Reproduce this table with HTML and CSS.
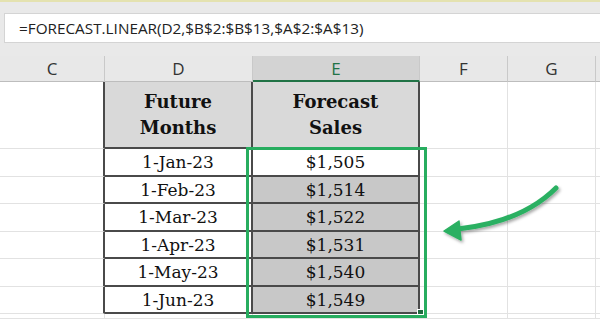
FILE: index.html
```html
<!DOCTYPE html>
<html>
<head>
<meta charset="utf-8">
<link rel="stylesheet" href="styles.css">
</head>
<body>
<div class="app">
  <div class="topbar">
    <div class="formula">=FORECAST.LINEAR(D2,$B$2:$B$13,$A$2:$A$13)</div>
  </div>
  <div class="sheet">
    <div class="colhead">C</div>
    <div class="colhead">D</div>
    <div class="colhead active">E</div>
    <div class="colhead">F</div>
    <div class="colhead">G</div>
    <div class="colhead last"></div>

    <div class="cell edge"></div>
    <div class="cell tbl head">Future<br>Months</div>
    <div class="cell tbl head">Forecast<br>Sales</div>
    <div class="cell"></div><div class="cell"></div><div class="cell last"></div>

    <div class="cell edge"></div>
    <div class="cell tbl">1-Jan-23</div>
    <div class="cell tbl">$1,505</div>
    <div class="cell"></div><div class="cell"></div><div class="cell last"></div>

    <div class="cell edge"></div>
    <div class="cell tbl">1-Feb-23</div>
    <div class="cell tbl sel">$1,514</div>
    <div class="cell"></div><div class="cell"></div><div class="cell last"></div>

    <div class="cell edge"></div>
    <div class="cell tbl">1-Mar-23</div>
    <div class="cell tbl sel">$1,522</div>
    <div class="cell"></div><div class="cell"></div><div class="cell last"></div>

    <div class="cell edge"></div>
    <div class="cell tbl">1-Apr-23</div>
    <div class="cell tbl sel">$1,531</div>
    <div class="cell"></div><div class="cell"></div><div class="cell last"></div>

    <div class="cell edge"></div>
    <div class="cell tbl">1-May-23</div>
    <div class="cell tbl sel">$1,540</div>
    <div class="cell"></div><div class="cell"></div><div class="cell last"></div>

    <div class="cell edge"></div>
    <div class="cell tbl">1-Jun-23</div>
    <div class="cell tbl sel">$1,549</div>
    <div class="cell"></div><div class="cell"></div><div class="cell last"></div>

    <div class="cell"></div><div class="cell"></div><div class="cell"></div>
    <div class="cell"></div><div class="cell"></div><div class="cell last"></div>
  </div>

  <div class="selection"><div class="handle"></div></div>

  <svg class="arrow" width="600" height="319" viewBox="0 0 600 319">
    <defs>
      <filter id="sh" x="-20%" y="-20%" width="140%" height="140%">
        <feDropShadow dx="1.5" dy="2" stdDeviation="1.5" flood-color="#000" flood-opacity="0.35"/>
      </filter>
    </defs>
    <g filter="url(#sh)">
      <path d="M556 188 Q522 222 458 229" fill="none" stroke="#2bb062" stroke-width="5" stroke-linecap="round"/>
      <polygon points="444,231 459,221 461,240" fill="#2bb062" stroke="#2bb062" stroke-width="1.5" stroke-linejoin="round"/>
    </g>
  </svg>
</div>
</body>
</html>
```

FILE: styles.css
```css
* { box-sizing: border-box; }
html, body { margin: 0; padding: 0; }
body { background: #ffffff; overflow: hidden; }

.app {
  position: relative;
  width: 600px;
  height: 319px;
  overflow: hidden;
  background: #ffffff;
}

.topbar {
  height: 56px;
  background: #e9e9e9;
  border-top: 2px solid #e4e2b0;
  padding: 11px 0 0 4px;
}

.formula {
  height: 30px;
  background: #ffffff;
  border: 1px solid #d4d4d4;
  border-right: none;
  padding-left: 14px;
  font-family: "Open Sans", "Liberation Sans", sans-serif;
  font-size: 15.3px;
  line-height: 28px;
  color: #222;
  white-space: nowrap;
}

.sheet {
  display: grid;
  grid-template-columns: 105px 148px 167px 88px 88px 1fr;
  grid-template-rows: 26px 67px 28px 27px 28px 27px 28px 27px 1fr;
  height: 263px;
}

.colhead {
  background: #e8e8e8;
  border-right: 1px solid #c9c9c9;
  border-bottom: 1px solid #bdbdbd;
  font-family: "Open Sans", "Liberation Sans", sans-serif;
  font-size: 17px;
  color: #333;
  display: flex;
  align-items: center;
  justify-content: center;
}
.colhead.active {
  background: #d3d3d3;
  color: #217346;
  border-bottom: 2px solid #217346;
}
.colhead.last { border-right: none; }

.cell {
  border-right: 1px solid #e2e2e2;
  border-bottom: 1px solid #e2e2e2;
  background: #ffffff;
}
.cell.last { border-right: none; }
.cell.edge { border-right: 2px solid #4a4a4a; }

.tbl {
  border-right: 2px solid #4a4a4a;
  border-bottom: 2px solid #4a4a4a;
  font-family: "DejaVu Serif", "Liberation Serif", serif;
  font-size: 17px;
  color: #111;
  display: flex;
  align-items: center;
  justify-content: center;
  text-align: center;
}
.tbl.head {
  background: #d9d9d9;
  font-weight: bold;
  font-size: 18px;
  line-height: 26px;
}
.tbl.sel { background: #c8c8c8; }

.selection {
  position: absolute;
  left: 246px;
  top: 147px;
  width: 181px;
  height: 171px;
  border: 3px solid #27ad5f;
}
.handle {
  position: absolute;
  right: 0px;
  bottom: 0px;
  width: 7px;
  height: 6px;
  background: #1e6b3e;
  border: 1px solid #ffffff;
}

.arrow {
  position: absolute;
  left: 0;
  top: 0;
}
```
